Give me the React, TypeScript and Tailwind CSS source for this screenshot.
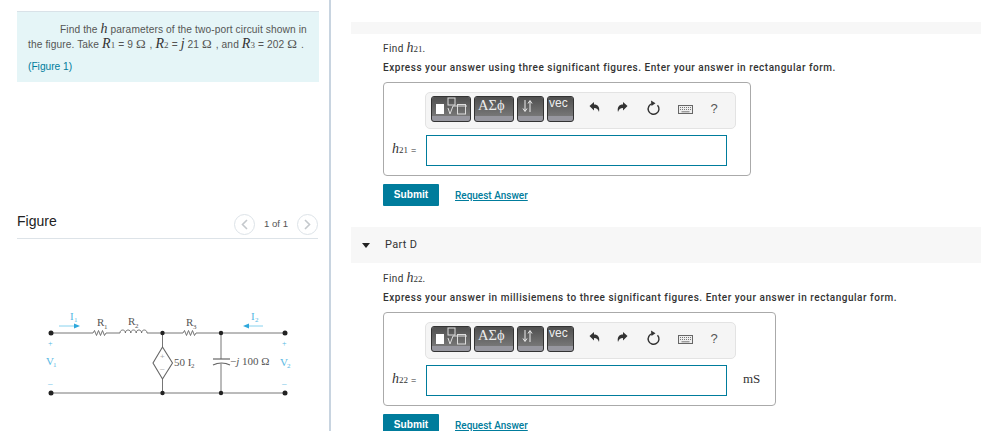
import React from 'react';

const sans = 'font-["Liberation_Sans",Arial,sans-serif]';
const ui = 'font-["Roboto",Arial,sans-serif]';
const serif = 'font-["Liberation_Serif",serif]';

const HVar: React.FC<{ sub: string }> = ({ sub }) => (
  <span className={`${serif} text-[#333] tracking-normal`}>
    <i className="text-[14px]">h</i>
    <span className="text-[9px]">{sub}</span>
  </span>
);

const Ohm: React.FC = () => <span className={`${serif} text-[13px] mr-[1px]`}>Ω</span>;

const RVar: React.FC<{ sub: string }> = ({ sub }) => (
  <>
    <i className={`${serif} text-[14px] text-[#333]`}>R</i>
    <span className={`${serif} text-[9px]`}>{sub}</span>
  </>
);

const ToolBtn: React.FC<{ w: string; children: React.ReactNode }> = ({ w, children }) => (
  <div className={`${w} h-[26px] rounded-[3px] border border-[#333] overflow-hidden flex flex-col bg-[#97979f]`}>
    <div className="h-[19px] shrink-0 bg-gradient-to-b from-[#4f4f4f] to-[#777] text-white flex items-start overflow-hidden">
      {children}
    </div>
  </div>
);

const Toolbar: React.FC = () => (
  <div className="w-[311px] h-[37px] bg-[#f5f5f5] border border-[#e3e3e3] rounded-[5px] flex items-start pl-[5px] pt-[3px]">
    <div className="flex gap-[3px]">
      <ToolBtn w="w-[40px]">
        <svg width="38" height="19" viewBox="0 0 38 19">
          <rect x="4" y="7" width="8" height="10" fill="#fff" />
          <rect x="16" y="1" width="7" height="7" fill="none" stroke="#ddd" />
          <path d="M16 11l2 6 3-8h14" fill="none" stroke="#ddd" />
          <rect x="25.5" y="7.5" width="8" height="9.5" fill="none" stroke="#ddd" />
        </svg>
      </ToolBtn>
      <ToolBtn w="w-[40px]">
        <span className={`${serif} text-[14.5px] leading-[17px] pl-[3px] text-[#eee] whitespace-nowrap`}>ΑΣϕ</span>
      </ToolBtn>
      <ToolBtn w="w-[27px]">
        <svg width="25" height="19" viewBox="0 0 25 19">
          <path d="M7 3v11M5 11.5l2 3 2-3M12 15V4M10 6.5l2-3 2 3" fill="none" stroke="#eee" strokeWidth="1" />
        </svg>
      </ToolBtn>
      <ToolBtn w="w-[27px]">
        <span className={`${sans} text-[12px] leading-[13px] pl-[1px] text-[#eee]`}>vec</span>
      </ToolBtn>
    </div>
    <svg className="ml-[15px] mt-[3px]" width="130" height="20" viewBox="0 0 130 20">
      {/* undo */}
      <path d="M0.5 7L5 3V5.5C9 5.5 11 8 10 13 9 10.5 8 9 5 9V11.5Z" fill="#333" />
      {/* redo */}
      <path d="M38.5 7L34 3V5.5C30 5.5 28 8 29 13 30 10.5 31 9 34 9V11.5Z" fill="#333" />
      {/* reset */}
      <path d="M63.5 4.6A5.4 5.4 0 1 0 68.5 6.2" fill="none" stroke="#333" strokeWidth="1.4" />
      <path d="M62 1.5L66.5 4.3 62.5 7Z" fill="#333" />
      {/* keyboard */}
      <rect x="89.5" y="6.5" width="14" height="8" fill="#eee" stroke="#666" />
      <path d="M91 8.5h11M91 10.5h11" stroke="#777" strokeDasharray="1 1" />
      <path d="M92.5 12.8h8" stroke="#777" />
      <text x="125" y="14" fontSize="13" fill="#555" textAnchor="middle" fontFamily="Liberation Sans">?</text>
    </svg>
  </div>
);

const AnswerBlock: React.FC<{ sub: string; width: string; unit?: string }> = ({ sub, width, unit }) => (
  <div className={`${width} border border-[#aaa] rounded-[4px] pt-[9px] pb-[9px] pl-[41px]`}>
    <Toolbar />
    <div className="flex items-center mt-[6px]">
      <div className="w-[1px]" />
      <div className="w-[301px] h-[31px] border border-[#007c9c] bg-white relative">
        <span className="absolute left-[-35px] top-[-1px] whitespace-nowrap">
          <HVar sub={sub} />
          <span className={`${sans} text-[9px] text-[#333] ml-[3px]`}>=</span>
        </span>
      </div>
      {unit && <span className={`${serif} ml-[16px] -mt-[3px] text-[13px] text-[#333]`}>{unit}</span>}
    </div>
  </div>
);

const Actions: React.FC = () => (
  <div className="flex items-center mt-[8px]">
    <button className={`${sans} w-[56px] h-[22px] bg-[#007c9c] rounded-[1px] text-white text-[10.2px] font-bold`}>Submit</button>
    <a className={`${ui} ml-[16px] text-[#007c9c] text-[10px] font-medium underline`}>Request Answer</a>
  </div>
);

const Circuit: React.FC = () => (
  <svg className="block" width="300" height="131" viewBox="0 0 300 131">
    <g fill="none" stroke="#666" strokeWidth="0.9">
      <path d="M31 33H73l1.5-2.5 2 5 2-5 2 5 2-5 2 5 1.5-2.5H100" />
      <path d="M100 33c0-4 5.4-4 5.4 0c0-4 5.4-4 5.4 0c0-4 5.4-4 5.4 0c0-4 5.4-4 5.4 0c0-4 5.4-4 5.4 0" />
      <path d="M127 33H163l1.5-2.5 2 5 2-5 2 5 2-5 2 5 1.5-2.5H265" />
      <path d="M142.5 33V47M142.5 79V93M201 33V59M201 63.5V93M31 93H265" />
      <path d="M142.5 47L152.5 63 142.5 79 133 63Z" strokeWidth="1.1" />
      <path d="M193 59H210" strokeWidth="1.2" />
      <path d="M193 65c5-2.5 12-2.5 17 0" strokeWidth="1.2" />
    </g>
    <g fill="#222">
      <circle cx="31" cy="33" r="2.5" />
      <circle cx="142.5" cy="33" r="2.2" />
      <circle cx="201" cy="33" r="2.2" />
      <circle cx="265" cy="33" r="2.5" />
      <circle cx="31" cy="93" r="2.5" />
      <circle cx="142.5" cy="93" r="2.2" />
      <circle cx="201" cy="93" r="2.2" />
      <circle cx="265" cy="93" r="2.5" />
    </g>
    <g fill="none" stroke="#7ccdec" strokeWidth="0.9">
      <path d="M39 26H56" />
      <path d="M227 26H243" />
    </g>
    <path d="M60 26l-6-2.5v5Z" fill="#2ea8dc" />
    <path d="M223 26l6-2.5v5Z" fill="#2ea8dc" />
    <g fontFamily="Liberation Serif" fontSize="11" fill="#555">
      <text x="77" y="26">R</text>
      <text x="84" y="29" fontSize="7">1</text>
      <text x="108" y="25">R</text>
      <text x="115" y="28" fontSize="7">2</text>
      <text x="166" y="26">R</text>
      <text x="173" y="29" fontSize="7">3</text>
      <text x="154" y="66">50 I</text>
      <text x="171" y="68" fontSize="7">2</text>
      <text x="210" y="65">−<tspan fontStyle="italic">j</tspan> 100 Ω</text>
    </g>
    <g fontFamily="Liberation Serif" fontSize="11" fill="#55b8e4">
      <text x="50" y="20">I</text>
      <text x="54" y="22" fontSize="7">1</text>
      <text x="231" y="20">I</text>
      <text x="235" y="22" fontSize="7">2</text>
      <text x="26" y="65">V</text>
      <text x="33" y="67" fontSize="7">1</text>
      <text x="260" y="66">V</text>
      <text x="267" y="68" fontSize="7">2</text>
      <text x="28" y="46" fontSize="8">+</text>
      <text x="262" y="46" fontSize="8">+</text>
      <text x="28" y="86" fontSize="9">–</text>
      <text x="262" y="86" fontSize="9">–</text>
    </g>
    <g fontFamily="Liberation Sans" fontSize="8" fill="#aaa">
      <text x="140" y="59">+</text>
      <text x="140" y="71">–</text>
    </g>
  </svg>
);

const App: React.FC = () => (
  <div className="w-[981px] h-[431px] overflow-hidden bg-white flex">
    <div className="w-[331px] h-full shrink-0 border-r-2 border-[#c8d4e0] pt-[11px] relative">
      <div className="ml-[17px] w-[302px] h-[71px] bg-[#e5f5f7] border-t border-[#d9e2e8] pl-[11px] pt-[10px]">
        <p className={`${sans} text-[10.2px] tracking-[0.1px] leading-[14px] text-[#555] whitespace-nowrap`}>
          <span className="pl-[32px]">Find the </span>
          <i className={`${serif} text-[14px] text-[#333]`}>h</i> parameters of the two-port circuit shown in
          <br />
          the figure. Take <RVar sub="1" /> = 9 <Ohm /> , <RVar sub="2" /> = <i className={`${serif} text-[14px] text-[#333]`}>j</i> 21 <Ohm /> , and <RVar sub="3" /> = 202 <Ohm /> .
        </p>
        <a className={`${sans} block mt-[8px] text-[10.2px] leading-[13px] text-[#007c9c]`}>(Figure 1)</a>
      </div>
      <div className="ml-[17px] w-[301px] mt-[130px] h-[27px] border-b border-[#dde3e8] flex items-start justify-between">
        <span className={`${sans} text-[14px] leading-[18px] text-[#222]`}>Figure</span>
        <div className="flex items-center gap-[9px] mt-[2px]">
          <span className="w-[21px] h-[21px] rounded-full border border-[#dde3e8] flex items-center justify-center">
            <svg width="7" height="11" viewBox="0 0 7 11"><path d="M6 1L1.5 5.5 6 10" fill="none" stroke="#c4c8cc" strokeWidth="1.6" /></svg>
          </span>
          <span className={`${sans} text-[9.6px] text-[#555]`}>1 of 1</span>
          <span className="w-[21px] h-[21px] rounded-full border border-[#dde3e8] flex items-center justify-center">
            <svg width="7" height="11" viewBox="0 0 7 11"><path d="M1 1l4.5 4.5L1 10" fill="none" stroke="#c4c8cc" strokeWidth="1.6" /></svg>
          </span>
        </div>
      </div>
      <div className="ml-[20px] mt-[61px]">
        <Circuit />
      </div>
    </div>

    <div className="flex-1 pl-[20px] pt-[22px]">
      <div className="h-[12px] bg-[#f7f7f7]" />
      <div className="pl-[32px]">
        <p className={`${ui} mt-[6px] text-[10px] tracking-[0.4px] leading-[15px] text-[#333] whitespace-nowrap`}>
          Find <HVar sub="21" />.
        </p>
        <p className={`${ui} mt-[5px] text-[10px] leading-[12px] font-medium text-[#333] tracking-[0.53px] whitespace-nowrap`}>
          Express your answer using three significant figures. Enter your answer in rectangular form.
        </p>
        <div className="mt-[8px]">
          <AnswerBlock sub="21" width="w-[368px]" />
        </div>
        <Actions />
      </div>
      <div className="mt-[21px] h-[36px] bg-[#f7f7f7] flex items-center pl-[11px]">
        <span className="w-0 h-0 border-x-[4px] border-x-transparent border-t-[5px] border-t-[#222]" />
        <span className={`${ui} ml-[15px] mt-[1px] text-[11px] tracking-[0.3px] text-[#333]`}>Part D</span>
      </div>
      <div className="pl-[32px]">
        <p className={`${ui} mt-[7px] text-[10px] tracking-[0.4px] leading-[15px] text-[#333] whitespace-nowrap`}>
          Find <HVar sub="22" />.
        </p>
        <p className={`${ui} mt-[5px] text-[10px] leading-[12px] font-medium text-[#333] tracking-[0.53px] whitespace-nowrap`}>
          Express your answer in millisiemens to three significant figures. Enter your answer in rectangular form.
        </p>
        <div className="mt-[8px]">
          <AnswerBlock sub="22" width="w-[393px]" unit="mS" />
        </div>
        <Actions />
      </div>
    </div>
  </div>
);

export default App;
